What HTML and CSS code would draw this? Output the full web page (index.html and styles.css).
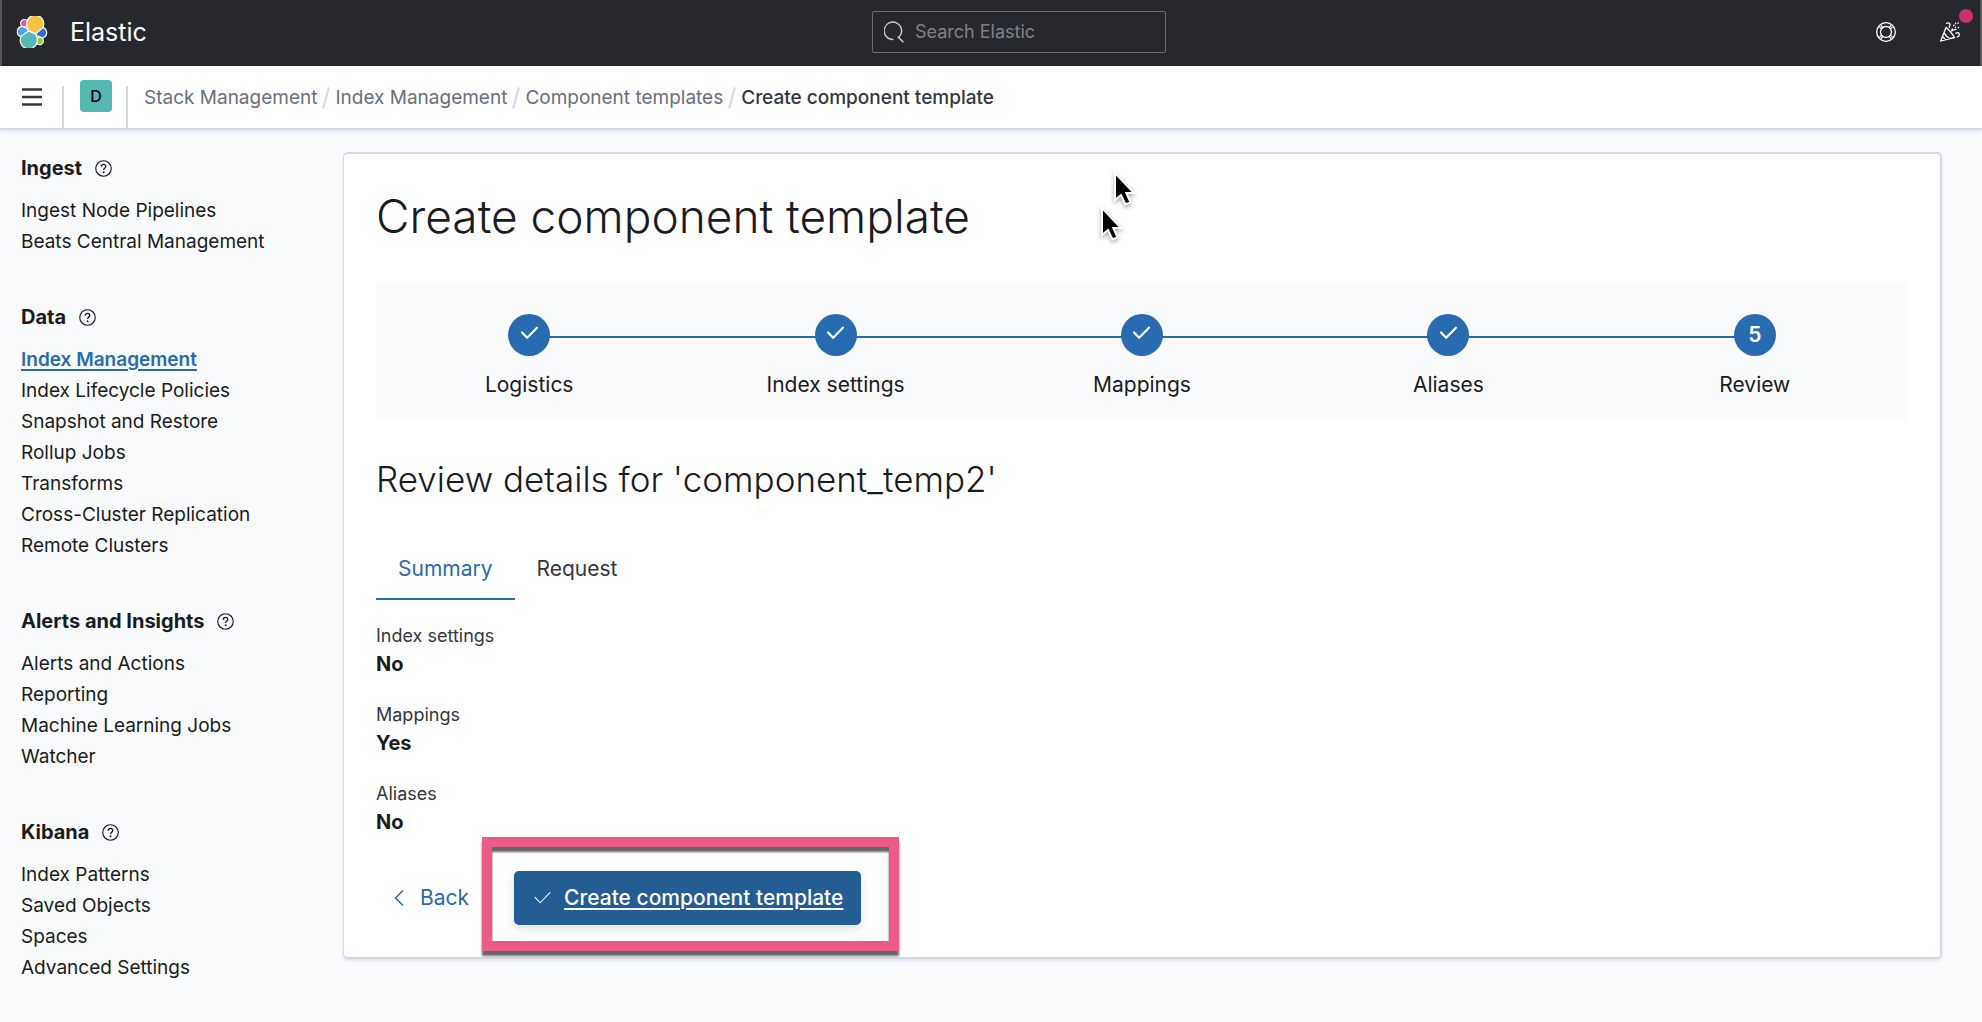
FILE: index.html
```html
<!DOCTYPE html>
<html lang="en">
<head>
<meta charset="utf-8">
<title>Create component template - Elastic</title>
<link rel="stylesheet" href="styles.css">
</head>
<body>
<svg class="sprite" aria-hidden="true">
  <symbol id="help" viewBox="0 0 16 16"><circle cx="8" cy="8" r="7.3" fill="none" stroke="currentColor" stroke-width="1.1"/><path d="M5.900 6.300C5.900 4.900 6.800 4.200 8 4.200s2.100.8 2.100 1.900c0 1.600-2 1.700-2 3.300" fill="none" stroke="currentColor" stroke-width="1.2"/><circle cx="8.1" cy="11.600" r=".9" fill="currentColor"/></symbol>
  <symbol id="check" viewBox="0 0 16 16"><path d="M1 7 5.800 12 15 2.500" fill="none" stroke="currentColor" stroke-linecap="round" stroke-linejoin="round"/></symbol>
</svg>
<header class="topbar">
  <a class="brand" href="#">
    <svg class="brand-logo" viewBox="0 0 32 32" aria-hidden="true">
      <g stroke="#fff" stroke-width="1.2">
        <circle cx="8.300" cy="7.200" r="3.700" fill="#e0569b"/>
        <circle cx="23.700" cy="24.900" r="3.700" fill="#93c83e"/>
        <path d="M6 10.300A5.500 5.500 0 0 0 5.200 21L13.500 18V13.600Z" fill="#4ba3eb"/>
        <path d="M26 11.300A5.500 5.500 0 0 1 26.800 22L18.500 18.600V16.500Z" fill="#2f72c4"/>
        <path d="M12.200 14.300 19.800 17.800 26.400 12.200A8.500 8.500 0 1 0 10.800 6.600Q10.200 9.500 12.200 14.300Z" fill="#f6c244"/>
        <path d="M19.800 18.200 12.400 14.900 5.600 19.800A8.500 8.500 0 1 0 21.200 25.400Q21.800 22.500 19.800 18.200Z" fill="#54b9b1"/>
      </g>
    </svg>
    <span>Elastic</span>
  </a>
  <label class="search">
    <svg class="search-icon" viewBox="0 0 20 22" aria-hidden="true"><path d="M9.500 18.500A8.700 8.700 0 1 1 15.300 15.700L14.300 16.300 19.500 21.300" fill="none" stroke="#c9cacd" stroke-width="1.400"/></svg>
    <input type="search" placeholder="Search Elastic" aria-label="Search Elastic">
  </label>
  <div class="actions">
    <button class="action" type="button" aria-label="Help">
      <svg class="action-icon" viewBox="0 0 20 20" fill="none" stroke="#fff"><circle cx="10" cy="10" r="9.300" stroke-width="1.300"/><circle cx="10" cy="10" r="5.500" stroke-width="1.300"/><path d="M3.500 5 6 7.200M5 3.500 7.200 6M16.500 5 14 7.200M15 3.500 12.800 6M3.500 15 6 12.800M5 16.500 7.200 14M16.500 15 14 12.800M15 16.500 12.800 14" stroke-width="1.200"/></svg>
    </button>
    <button class="action" type="button" aria-label="What's new">
      <svg class="action-icon" viewBox="0 0 20 20" fill="none" stroke="#fff" stroke-width="1.300"><path d="M6 5.500.8 18.800 14.500 15.500C12 11.500 9.500 8 6 5.500ZM4 10.500C5.500 13.500 7.500 15.500 10 16.500M2.500 14.500 5.500 17.500M6 1.500C8.500.3 10.500 1 9.800 3.500 9.500 4.500 9.200 5.300 9 6M15.500 11.500C18 9.800 19.500 11 19.200 13 19 14.500 18 15 16.800 14.800M11.500 9.500 12.500 6.500M12.500 8.500 16.500 7.200"/><path d="M13 3.500h1.500M15 1.500h1.300M17.500 1h1.300M17.800 5.500h1.300M15 5.200h1" stroke-width="1.500"/></svg>
      <span class="dot"></span>
    </button>
  </div>
</header>
<div class="navbar">
  <button class="menu" type="button" aria-label="Toggle navigation">
    <svg class="menu-icon" viewBox="0 0 20 18" aria-hidden="true"><path d="M0 1.500h20M0 9h20M0 16.500h20" stroke="#343741" stroke-width="2.500"/></svg>
  </button>
  <button class="space" type="button" aria-label="Default space"><span class="avatar">D</span></button>
  <nav aria-label="Breadcrumb">
    <ol class="crumbs">
      <li><a href="#">Stack Management</a></li>
      <li><a href="#">Index Management</a></li>
      <li><a href="#">Component templates</a></li>
      <li aria-current="page">Create component template</li>
    </ol>
  </nav>
</div>
<div class="layout">
  <nav class="sidebar" aria-label="Management">
    <section>
      <h2>Ingest <svg class="help" aria-hidden="true"><use href="#help"/></svg></h2>
      <ul><li><a href="#">Ingest Node Pipelines</a></li><li><a href="#">Beats Central Management</a></li></ul>
    </section>
    <section>
      <h2>Data <svg class="help" aria-hidden="true"><use href="#help"/></svg></h2>
      <ul><li><a class="current" href="#">Index Management</a></li><li><a href="#">Index Lifecycle Policies</a></li><li><a href="#">Snapshot and Restore</a></li><li><a href="#">Rollup Jobs</a></li><li><a href="#">Transforms</a></li><li><a href="#">Cross-Cluster Replication</a></li><li><a href="#">Remote Clusters</a></li></ul>
    </section>
    <section>
      <h2>Alerts and Insights <svg class="help" aria-hidden="true"><use href="#help"/></svg></h2>
      <ul><li><a href="#">Alerts and Actions</a></li><li><a href="#">Reporting</a></li><li><a href="#">Machine Learning Jobs</a></li><li><a href="#">Watcher</a></li></ul>
    </section>
    <section>
      <h2>Kibana <svg class="help" aria-hidden="true"><use href="#help"/></svg></h2>
      <ul><li><a href="#">Index Patterns</a></li><li><a href="#">Saved Objects</a></li><li><a href="#">Spaces</a></li><li><a href="#">Advanced Settings</a></li></ul>
    </section>
  </nav>
  <main class="panel">
    <h1>Create component template</h1>
    <ol class="steps">
      <li><button type="button"><span class="bubble"><svg aria-hidden="true"><use href="#check"/></svg></span>Logistics</button></li>
      <li><button type="button"><span class="bubble"><svg aria-hidden="true"><use href="#check"/></svg></span>Index settings</button></li>
      <li><button type="button"><span class="bubble"><svg aria-hidden="true"><use href="#check"/></svg></span>Mappings</button></li>
      <li><button type="button"><span class="bubble"><svg aria-hidden="true"><use href="#check"/></svg></span>Aliases</button></li>
      <li><button type="button" aria-current="step"><span class="bubble">5</span>Review</button></li>
    </ol>
    <h2>Review details for 'component_temp2'</h2>
    <div class="tabs" role="tablist">
      <button type="button" role="tab" aria-selected="true">Summary</button>
      <button type="button" role="tab" aria-selected="false">Request</button>
    </div>
    <dl class="summary">
      <div><dt>Index settings</dt><dd>No</dd></div>
      <div><dt>Mappings</dt><dd>Yes</dd></div>
      <div><dt>Aliases</dt><dd>No</dd></div>
    </dl>
    <div class="buttons">
      <button class="back" type="button"><svg class="chevron" viewBox="0 0 10 16" aria-hidden="true"><path d="M8.500 1 1.500 8 8.500 15" fill="none" stroke="currentColor" stroke-width="1.500" stroke-linecap="round"/></svg>Back</button>
      <div class="submit">
        <button class="create" type="button"><svg aria-hidden="true"><use href="#check"/></svg><span>Create component template</span></button>
        <span class="highlight"></span>
      </div>
    </div>
    <svg class="pointers" viewBox="0 0 48 80" aria-hidden="true">
      <g fill="#000" stroke="#fff" stroke-width="2">
        <path d="M15 3V30L21 25 25.500 34.500 30.500 32.300 26.300 23H34Z"/>
        <path d="M2 38V65L8 60 12.500 69.500 17.500 67.300 13.300 58H21Z"/>
      </g>
    </svg>
  </main>
</div>
</body>
</html>
```
FILE: styles.css
```css
* { box-sizing: border-box; }
body {
  margin: 0;
  min-height: 100vh;
  background: #fafbfd;
  color: #1a1c21;
  font-family: Inter, "Liberation Sans", sans-serif;
  font-size: 18px;
  line-height: 30px;
}
button { margin: 0; padding: 0; border: 0; background: none; color: inherit; font: inherit; cursor: pointer; }
a { color: inherit; text-decoration: none; }
ul, ol, dl, dd, h1, h2 { margin: 0; padding: 0; }
ul, ol { list-style: none; }
svg { display: block; flex: none; }
.sprite { position: absolute; width: 0; height: 0; }

.topbar {
  display: flex;
  align-items: center;
  justify-content: space-between;
  height: 66px;
  padding-bottom: 3px;
  background: #27282e;
  box-shadow: inset 2px 0 #54555a, inset -2px 0 #54555a;
}
.brand { display: flex; align-items: center; gap: 22px; width: 184px; padding-left: 16px; color: #fff; font-size: 25px; }
.brand-logo { width: 32px; height: 32px; }
.search {
  display: flex;
  align-items: center;
  gap: 11px;
  width: 294px;
  height: 42px;
  padding: 0 11px;
  border: 1px solid #6b6c71;
  border-radius: 2px;
}
.search-icon { width: 20px; height: 22px; }
.search input { flex: 1; min-width: 0; padding: 0; border: 0; outline: 0; background: none; color: #fff; font: inherit; }
.search input::placeholder { color: #808186; opacity: 1; }
.actions { display: flex; }
.action { position: relative; display: flex; align-items: center; justify-content: center; width: 64px; height: 63px; }
.action-icon { width: 20px; height: 20px; }
.dot { position: absolute; top: 9px; right: 9px; width: 14px; height: 14px; border-radius: 50%; background: #cc3070; }

.navbar {
  display: flex;
  align-items: flex-end;
  height: 64px;
  border-bottom: 2px solid #d3dae6;
  background: #fff;
  box-shadow: 0 2px 3px rgba(60, 80, 120, .12);
}
.menu, .space { display: flex; height: 42px; border-right: 2px solid #d3dae6; }
.menu { width: 64px; padding: 2px 0 0 22px; }
.menu-icon { width: 20px; height: 18px; }
.space { width: 64px; padding-left: 16px; }
.avatar { width: 32px; height: 32px; margin-top: -6px; border-radius: 4px; background: #54b9b1; color: #000; font-size: 16px; font-weight: 500; line-height: 32px; text-align: center; }
.crumbs { display: flex; height: 45px; padding-left: 16px; color: #69707d; font-size: 19px; }
.crumbs li { display: flex; }
.crumbs li + li::before { content: ""; width: 2px; height: 22px; margin: 4px 8px; background: #d3dae6; transform: rotate(15deg); }
.crumbs [aria-current] { color: #343741; font-weight: 500; }

.layout { display: flex; align-items: flex-start; padding: 22px 40px 32px 21px; }
.sidebar { flex: none; width: 322px; padding-top: 1px; font-size: 19px; }
.sidebar section { margin-bottom: 45px; }
.sidebar section:last-child { margin-bottom: 0; }
.sidebar h2 { display: flex; align-items: center; gap: 13px; margin-bottom: 12px; font-size: 20px; font-weight: 700; line-height: 30px; }
.help { width: 17px; height: 17px; }
.sidebar li { line-height: 31px; }
.sidebar .current { color: #296bb0; font-weight: 600; text-decoration: underline; text-decoration-thickness: 2px; text-underline-offset: 3px; }

.panel {
  position: relative;
  flex: 1;
  padding: 30px 32px 32px;
  border: 2px solid #d3dae6;
  border-left-width: 1px;
  border-radius: 5px;
  background: #fff;
  box-shadow: 0 2px 3px rgba(60, 80, 120, .12);
}
h1 { margin-bottom: 34px; font-size: 46px; font-weight: 300; line-height: 64px; }
.panel h2 { font-size: 35px; font-weight: 300; line-height: 48px; }
.steps { display: grid; grid-template-columns: repeat(5, 1fr); margin-bottom: 35px; padding: 32px 0 20px; background: #fafbfd; }
.steps li { position: relative; display: flex; justify-content: center; }
.steps li + li::before { content: ""; position: absolute; top: 22px; right: 50%; width: 100%; height: 2px; background: #296bb0; }
.steps button { position: relative; z-index: 1; display: flex; flex-direction: column; align-items: center; gap: 14px; font-size: 21px; }
.bubble { display: flex; align-items: center; justify-content: center; width: 42px; height: 42px; border-radius: 50%; background: #296bb0; color: #fff; font-weight: 600; }
.bubble svg { width: 17px; height: 17px; margin-bottom: 4px; stroke-width: 2; }
.tabs { display: flex; margin: 35px 0 21px; font-size: 21px; }
.tabs button { padding: 16px 22px 14px; border-bottom: 2px solid transparent; color: #343741; }
.tabs [aria-selected="true"] { border-color: #296bb0; color: #296bb0; }
.summary div { margin-bottom: 21px; }
.summary dt { line-height: 29px; color: #343741; }
.summary dd { font-size: 20px; font-weight: 700; line-height: 29px; }
.buttons { display: flex; align-items: center; gap: 45px; margin-top: 34px; padding-left: 18px; font-size: 21px; }
.back { display: flex; align-items: center; gap: 16px; color: #296bb0; }
.chevron { width: 10px; height: 16px; }
.submit { position: relative; }
.create { display: flex; align-items: center; gap: 13px; height: 54px; padding: 0 18px 0 20px; border-radius: 5px; background: #245c94; color: #fff; font-weight: 500; box-shadow: 0 4px 10px rgba(60, 80, 120, .2); }
.create svg { width: 17px; height: 17px; }
.create span { text-decoration: underline; text-decoration-thickness: 2px; text-underline-offset: 3px; }
.highlight { position: absolute; top: -34px; right: -38px; bottom: -26px; left: -32px; border: 10px solid #ec5a88; filter: drop-shadow(0 5px 1px rgba(0, 0, 0, .6)); pointer-events: none; }
.pointers { position: absolute; top: 16px; left: 756px; width: 48px; height: 80px; filter: drop-shadow(0 2px 2px rgba(0, 0, 0, .35)); }
```
